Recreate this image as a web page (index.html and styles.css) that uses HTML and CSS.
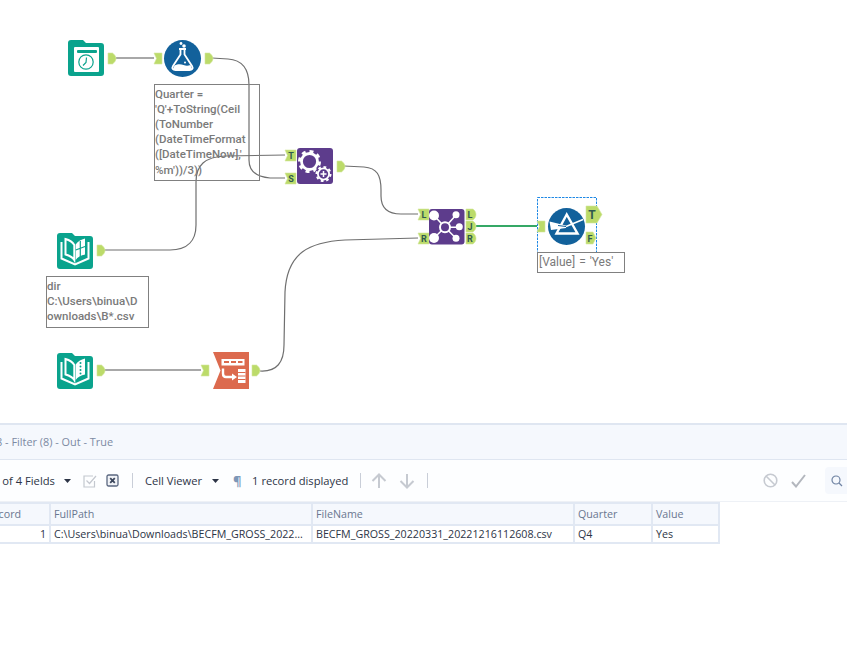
FILE: index.html
```html
<!DOCTYPE html>
<html lang="en">
<head>
<meta charset="utf-8">
<title>Workflow</title>
<link rel="stylesheet" href="styles.css">
</head>
<body>
<main class="app">
  <section class="canvas">
    <svg class="diagram" width="847" height="423" viewBox="0 0 847 423">
      <defs>
        <path id="out" d="M0 0h4.500c2 1.500 3.500 3.500 3.500 5.500s-1.500 4-3.500 5.500h-4.500z"/>
        <path id="in" d="M0 0h8v11h-8l2.500-5.500z"/>
        <path id="folder" d="M2 0h13l3 3h15a3 3 0 0 1 3 3v27a3 3 0 0 1-3 3h-30a3 3 0 0 1-3-3v-30a3 3 0 0 1 3-3z"/>
      </defs>

      <g class="wire">
        <path d="M116 58H154"/>
        <path d="M104 370H201"/>
        <path class="thin" d="M212 58L228 59C243 60 249 70 249 85V160C249 171 257 177 270 178H285"/>
        <path class="thin" d="M104 250H170C188 250 196 240 196 225V182C196 165 205 157 225 156L285 155"/>
        <path class="thin" d="M344 166L364 167C377 168 381 175 381 190V196C381 209 388 214 401 214H418"/>
        <path class="thin" d="M260 371C277 372 284 362 284 345L285 292C287 252 310 242 345 240L418 238"/>
      </g>
      <path class="wire-active" d="M476 226H537"/>
      <rect class="selection" x="537.500" y="197.500" width="59" height="55"/>

      <g class="anchor">
        <use href="#out" x="108" y="53"/>
        <use href="#in" x="154" y="53"/>
        <use href="#out" x="205" y="53"/>
        <use href="#out" x="97" y="245"/>
        <use href="#out" x="97" y="365"/>
        <use href="#in" x="201" y="365"/>
        <use href="#out" x="252" y="365"/>
        <use href="#out" x="337" y="161"/>
        <use href="#in" x="537" y="221"/>
        <path d="M285 150h11v11h-11l2.500-5.500z"/>
        <path d="M285 173h11v11h-11l2.500-5.500z"/>
        <path d="M418 209h11v11h-11l2.500-5.500z"/>
        <path d="M418 233h11v11h-11l2.500-5.500z"/>
        <path d="M466 209h7c2 1.500 3 3.500 3 5.500s-1 4-3 5.500h-7z"/>
        <path d="M466 221h7c2 1.500 3 3.500 3 5.500s-1 4-3 5.500h-7z"/>
        <path d="M466 233h7c2 1.500 3 3.500 3 5.500s-1 4-3 5.500h-7z"/>
        <path d="M586 206h11l5 8.500l-5 8.500h-11z"/>
        <path d="M586 232h7l3 6l-3 6h-7z"/>
      </g>
      <g class="port-label">
        <text x="291" y="158.500">T</text>
        <text x="291" y="181.500">S</text>
        <text x="424" y="217.500">L</text>
        <text x="424" y="241.500">R</text>
        <text x="470" y="217.500">L</text>
        <text x="470" y="229.500">J</text>
        <text x="470" y="241.500">R</text>
        <text class="port-big" x="592" y="218.500">T</text>
        <text x="590" y="241.500">F</text>
      </g>

      <!-- Date/time input -->
      <g transform="translate(68 40)">
        <use href="#folder" class="teal"/>
        <rect class="white" x="6" y="7" width="25" height="25" rx="1"/>
        <rect class="teal" x="9" y="10" width="20" height="3" rx="1"/>
        <circle class="teal-line" cx="18" cy="22" r="7.200"/>
        <path class="teal-line" d="M18.500 17.500L18 22.500L15 25.500"/>
      </g>

      <!-- Flask -->
      <circle class="blue" cx="182.500" cy="58.500" r="18.500"/>
      <g class="white">
        <circle cx="181" cy="43.500" r="1.400"/>
        <circle cx="184" cy="46" r="1.800"/>
      </g>
      <path class="flask" d="M179 49H186M180.500 49V54.500L173 66C171.500 68.500 173 70 175.500 70H189.500C192 70 193.500 68.500 192 66L184.500 54.500V49"/>
      <path class="white" d="M174.500 65.500C178 63.500 181 64 183.500 65S188 66 190.500 65L192 69H173Z"/>
      <circle class="blue-line" cx="181" cy="60.500" r="1.500"/>
      <circle class="white" cx="185" cy="62.500" r="1"/>

      <!-- Formula -->
      <rect class="purple" x="297" y="148" width="36" height="36" rx="3"/>
      <circle class="gear-ring" cx="309.500" cy="161.500" r="8"/>
      <circle class="gear-teeth" cx="309.500" cy="161.500" r="10" pathLength="48"/>
      <circle class="purple" cx="323.500" cy="174" r="8.500"/>
      <circle class="gear-ring small" cx="323.500" cy="174" r="5.600"/>
      <circle class="gear-teeth small" cx="323.500" cy="174" r="7" pathLength="32"/>
      <path class="white-line" d="M320.500 174H326.500M323.500 171V177"/>

      <!-- Join -->
      <rect class="purple" x="429" y="209" width="35.500" height="35.500" rx="3"/>
      <path class="white-line" d="M434 215.500L445 227.300L456 215M434 238L445 227.300L456 238.300M445 227.300H459"/>
      <circle class="purple ring-join" cx="445" cy="227.300" r="5"/>
      <g class="white">
        <circle cx="434" cy="215.500" r="5"/>
        <circle cx="434" cy="238" r="5"/>
        <circle cx="456" cy="214.800" r="3.500"/>
        <circle cx="459.300" cy="226.800" r="3.500"/>
        <circle cx="456" cy="238.300" r="3.500"/>
      </g>

      <!-- Filter -->
      <circle class="blue" cx="566.500" cy="226.500" r="18.500"/>
      <path class="white-line thick" d="M566.700 214.500L556.500 233.500H577.500Z"/>
      <path class="white" d="M549.500 221.500L566 225.500V228L551 230Z"/>
      <path class="white-line" d="M566 226.500L583 219.500"/>
      <path class="blue-line" d="M558 225.500L566 226.500"/>

      <!-- Directory -->
      <g transform="translate(57 233)">
        <use href="#folder" class="teal"/>
        <path class="book-line" d="M4.500 9V25.500L18 31.500L31.500 25.500V9"/>
        <path class="book-line" d="M8.500 6C12 7 15.500 9 17.300 12V27C15.500 24 12 22.500 8.500 21.500Z"/>
        <path class="white" d="M18.700 11.500C20.500 8.500 24 6.500 28 5.500V21.500C24 22.500 20.500 24 18.700 27Z"/>
        <path class="teal-line" d="M23.300 8V24.500M18.700 17L28 13.500"/>
      </g>

      <!-- Book input -->
      <g transform="translate(57 353)">
        <use href="#folder" class="teal"/>
        <path class="book-line" d="M4.500 9V25.500L18 31.500L31.500 25.500V9"/>
        <path class="book-line" d="M8.500 6C12 7 15.500 9 17.300 12V27C15.500 24 12 22.500 8.500 21.500Z"/>
        <path class="white" d="M18.700 11.500C20.500 8.500 24 6.500 28 5.500V21.500C24 22.500 20.500 24 18.700 27Z"/>
        <g class="teal">
          <circle cx="23.500" cy="10" r="1"/>
          <circle cx="23.500" cy="13.500" r="1"/>
          <circle cx="23.500" cy="17" r="1"/>
          <circle cx="23.500" cy="20.500" r="1"/>
        </g>
      </g>

      <!-- Select -->
      <path class="orange" d="M213 352H249V389H213L220.500 370.500Z"/>
      <rect class="white" x="221.500" y="359" width="23" height="6.500"/>
      <path class="orange-fill" d="M224 361h5v2h-5zM231 361h5v2h-5zM238 361h4.500v2h-4.500z"/>
      <path class="white-line thick" d="M223 368.500V373.500C223 376 224 377 226 377H233"/>
      <path class="white" d="M232 373.500L237 377L232 380.500Z"/>
      <rect class="white" x="238" y="369" width="7.500" height="14"/>
      <path class="orange-line" d="M238 372.500H245.500M238 376H245.500M238 379.500H245.500"/>
    </svg>

    <div class="note note-formula">Quarter =<br>'Q'+ToString(Ceil<br>(ToNumber<br>(DateTimeFormat<br>([DateTimeNow],'<br>%m'))/3))</div>
    <div class="note note-dir">dir<br>C:\Users\binua\D<br>ownloads\B*.csv</div>
    <div class="note note-filter">[Value] = 'Yes'</div>
  </section>

  <section class="results">
    <header class="results-title"><span>8 - Filter (8) - Out - True</span></header>

    <div class="toolbar">
      <span class="fields">4 of 4 Fields</span>
      <svg class="caret" width="7" height="4" viewBox="0 0 7 4"><path d="M0 0H7L3.500 4Z"/></svg>
      <svg class="tool-check" width="14" height="14" viewBox="0 0 14 14">
        <path class="ic-light" d="M11.500 7V13H1V2H10"/>
        <path class="ic-light" d="M3.500 6.500L6.500 9.500L13 2"/>
      </svg>
      <svg class="tool-x" width="13" height="13" viewBox="0 0 13 13">
        <rect class="ic-dark" x="1" y="1" width="11" height="11" rx="1.500"/>
        <path class="ic-dark-x" d="M4.200 4.200L8.800 8.800M8.800 4.200L4.200 8.800"/>
      </svg>
      <i class="sep sep-a"></i>
      <span class="viewer">Cell Viewer</span>
      <svg class="caret caret-viewer" width="7" height="4" viewBox="0 0 7 4"><path d="M0 0H7L3.500 4Z"/></svg>
      <span class="pilcrow">¶</span>
      <span class="count">1 record displayed</span>
      <i class="sep sep-b"></i>
      <svg class="arrow arrow-up" width="16" height="16" viewBox="0 0 16 16"><path d="M8 15V2M1.500 8L8 1.500L14.500 8"/></svg>
      <svg class="arrow arrow-down" width="16" height="16" viewBox="0 0 16 16"><path d="M8 1V14M1.500 8L8 14.500L14.500 8"/></svg>
      <i class="sep sep-c"></i>
      <span class="spacer"></span>
      <svg class="ban" width="15" height="15" viewBox="0 0 15 15"><circle cx="7.500" cy="7.500" r="6.300"/><path d="M3 3L12 12"/></svg>
      <svg class="done" width="15" height="14" viewBox="0 0 15 14"><path d="M1 8L5 12.500L14 1"/></svg>
      <div class="search">
        <svg width="12" height="12" viewBox="0 0 12 12"><circle cx="5" cy="5" r="4"/><path d="M8 8L11 11"/></svg>
      </div>
    </div>

    <table class="grid">
      <thead>
        <tr><th class="c-rec">Record</th><th class="c-path">FullPath</th><th class="c-name">FileName</th><th class="c-q">Quarter</th><th class="c-v">Value</th></tr>
      </thead>
      <tbody>
        <tr><td class="num">1</td><td>C:\Users\binua\Downloads\BECFM_GROSS_2022...</td><td>BECFM_GROSS_20220331_20221216112608.csv</td><td>Q4</td><td>Yes</td></tr>
      </tbody>
    </table>
  </section>
</main>
</body>
</html>
```

FILE: styles.css
```css
* { box-sizing: border-box; }

html, body {
  margin: 0;
  height: 100%;
  background: #fff;
  overflow: hidden;
}

body {
  font-family: "Open Sans", Roboto, sans-serif;
}

.app {
  display: flex;
  flex-direction: column;
  width: 847px;
  height: 657px;
}

/* Workflow canvas */
.canvas {
  position: relative;
  flex: 0 0 423px;
  height: 423px;
}

.diagram { display: block; }

.wire path { fill: none; stroke: #a8a8a8; stroke-width: 2; }
.wire path.thin { stroke: #6f6f6f; stroke-width: 1.200; }
.wire-active { fill: none; stroke: #35a866; stroke-width: 2; }

.anchor { fill: #bcdb6a; stroke: #d3e79d; stroke-width: .6; }
.port-label {
  font: 700 9px Roboto, sans-serif;
  fill: #2f5a4e;
  text-anchor: middle;
}
.port-label .port-big { font-size: 12px; }

.teal { fill: #0aa38d; }
.teal-line { fill: none; stroke: #0aa38d; stroke-width: 1.200; }
.white { fill: #fff; }
.white-line { fill: none; stroke: #fff; stroke-width: 1.500; }
.white-line.thick { stroke-width: 2.400; }
.book-line { fill: none; stroke: #fff; stroke-width: 2; }
.flask { fill: none; stroke: #fff; stroke-width: 1.800; }
.blue { fill: #12619b; }
.blue-line { fill: none; stroke: #12619b; stroke-width: 1; }
.purple { fill: #5d3c8c; }
.ring-join { stroke: #fff; stroke-width: 2; }
.orange { fill: #dc6a4e; }
.orange-fill { fill: #dc6a4e; }
.orange-line { fill: none; stroke: #dc6a4e; stroke-width: 1; }

.gear-ring { fill: none; stroke: #fff; stroke-width: 2.800; }
.gear-ring.small { stroke-width: 1.800; }
.gear-teeth { fill: none; stroke: #fff; stroke-width: 3; stroke-dasharray: 3 3; }
.gear-teeth.small { stroke-width: 2; stroke-dasharray: 2 2; }

.selection {
  fill: none;
  stroke: #1e88e5;
  stroke-width: 1;
  stroke-dasharray: 2.500 1;
}

.note {
  position: absolute;
  padding: 1.500px 0 0 0;
  background: transparent;
  border: 1px solid #808080;
  color: #7a7a7a;
  font-family: Roboto, sans-serif;
  font-size: 11.500px;
  font-weight: 500;
  line-height: 15.200px;
  white-space: nowrap;
}
.note-formula { left: 154px; top: 84px; width: 106px; height: 97px; }
.note-dir { left: 46px; top: 276px; width: 103px; height: 52px; }
.note-filter { left: 537px; top: 252px; width: 88px; height: 21px; background: #fff; padding: 2px 0 0 1px; font-size: 12px; font-weight: 400; word-spacing: 1px; }

/* Results panel */
.results {
  flex: 1;
  display: flex;
  flex-direction: column;
  border-top: 2px solid #dfe6f1;
  min-height: 0;
}

.results-title {
  flex: 0 0 35px;
  display: flex;
  align-items: center;
  padding-bottom: 1px;
  background: #f5f8fd;
  border-bottom: 1px solid #dfe6f1;
  color: #7c8aa3;
  font-size: 10.900px;
  overflow: hidden;
}
.results-title span { margin-left: -4px; white-space: nowrap; }

.toolbar {
  flex: 0 0 42px;
  display: flex;
  align-items: center;
  background: #fdfeff;
  border-bottom: 1px solid #eef1f6;
  color: #2c3446;
  font-size: 11.200px;
  white-space: nowrap;
  overflow: hidden;
}
.fields { margin-left: -7px; }
.toolbar .caret { flex: none; fill: #2c3446; margin-left: 9px; }
.toolbar .caret-viewer { margin-left: 10px; }
.tool-check { flex: none; margin-left: 12px; }
.tool-x { flex: none; margin-left: 9px; }
.ic-light { fill: none; stroke: #c4c8cf; stroke-width: 1.200; }
.ic-dark { fill: #f1f3f7; stroke: #5a6780; stroke-width: 1.300; }
.ic-dark-x { fill: none; stroke: #3b465c; stroke-width: 1.800; }
.sep { flex: none; width: 1px; height: 15px; background: #c9ced8; }
.sep-a { margin-left: 13px; }
.viewer { margin-left: 12px; }
.pilcrow { flex: none; width: 7px; margin-left: 14px; color: #7d97b8; font-weight: 700; font-size: 13px; }
.count { margin-left: 12px; }
.sep-b { margin-left: 12px; }
.arrow { flex: none; fill: none; stroke: #c6cad1; stroke-width: 2; }
.arrow-up { margin-left: 10px; }
.arrow-down { margin-left: 12px; }
.sep-c { margin-left: 12px; }
.spacer { flex: 1; }
.ban { flex: none; fill: none; stroke: #c6cad1; stroke-width: 1.600; }
.done { flex: none; margin-left: 13px; fill: none; stroke: #b3b7be; stroke-width: 2; }
.search {
  flex: none;
  display: flex;
  align-items: center;
  width: 30px;
  height: 27px;
  margin: 0 -8px 0 19px;
  padding-left: 6px;
  background: #f5f8fd;
  border-radius: 4px;
}
.search svg { fill: none; stroke: #6f83a3; stroke-width: 1.200; }

.grid {
  border-collapse: collapse;
  table-layout: fixed;
  width: 778px;
  margin: 0 0 0 -60px;
  font-size: 10.700px;
}
.grid th, .grid td {
  border: 2px solid #e1e8f3;
  padding: 0 3px;
  text-align: left;
  white-space: nowrap;
  overflow: hidden;
}
.grid th {
  height: 22px;
  background: #f5f8fd;
  color: #6a7790;
  font-weight: 400;
}
.grid th.c-rec { padding-left: 44px; }
.grid td {
  height: 18px;
  padding-top: 1px;
  color: #2c3446;
  line-height: 13px;
}
.grid .num { text-align: right; }
.c-rec { width: 109px; }
.c-path { width: 262px; }
.c-name { width: 262px; }
.c-q { width: 78px; }
.c-v { width: 67px; }
```
